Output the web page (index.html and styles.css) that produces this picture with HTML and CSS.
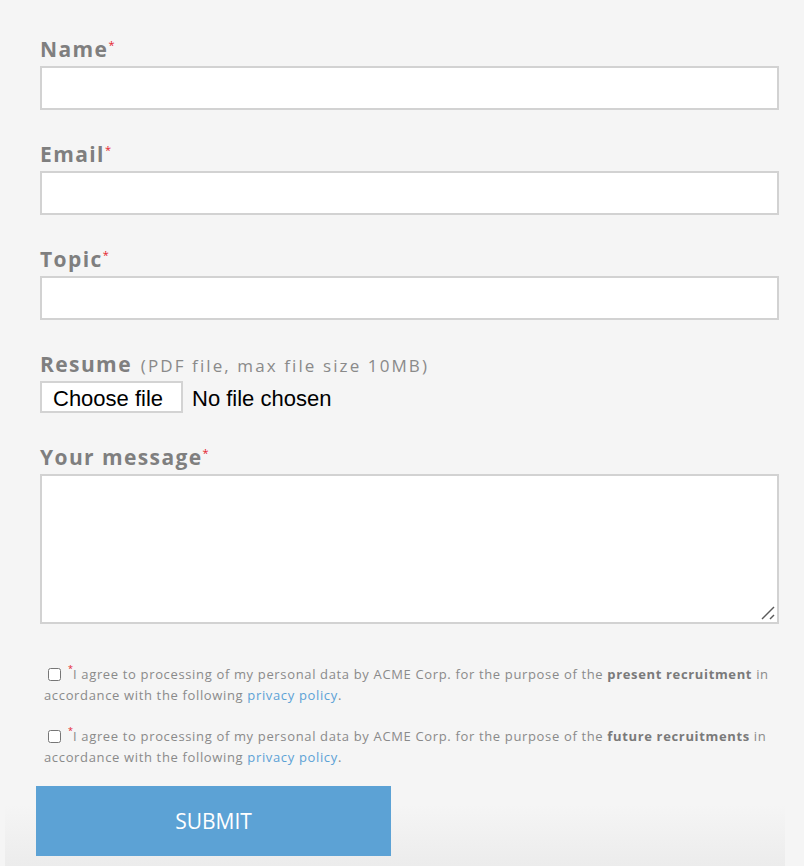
FILE: index.html
```html
<!DOCTYPE html>
<html lang="en">
<head>
<meta charset="utf-8">
<title>Application form</title>
<link rel="stylesheet" href="styles.css">
</head>
<body>
<div class="page">
  <form class="form">
    <div class="field">
      <label class="label" for="name">Name<sup class="req">*</sup></label>
      <input class="input" id="name" type="text">
    </div>
    <div class="field">
      <label class="label" for="email">Email<sup class="req">*</sup></label>
      <input class="input" id="email" type="email">
    </div>
    <div class="field">
      <label class="label" for="topic">Topic<sup class="req">*</sup></label>
      <input class="input" id="topic" type="text">
    </div>
    <div class="field">
      <div class="label">Resume <span class="hint">(PDF file, max file size 10MB)</span></div>
      <div class="file">
        <label class="file-btn" for="resume">Choose file</label>
        <span class="file-name">No file chosen</span>
        <input class="file-input" id="resume" type="file">
      </div>
    </div>
    <div class="field field-last">
      <label class="label" for="msg">Your message<sup class="req">*</sup></label>
      <div class="textarea-wrap">
        <textarea class="textarea" id="msg"></textarea>
        <svg class="grip" width="14" height="14" viewBox="0 0 14 14" aria-hidden="true">
          <line x1="1" y1="13" x2="13" y2="1" stroke="#5a5a5a" stroke-width="1.4"/>
          <line x1="9" y1="13" x2="13" y2="9" stroke="#5a5a5a" stroke-width="1.4"/>
        </svg>
      </div>
    </div>
    <p class="consent"><input class="check" type="checkbox"> <sup class="req small">*</sup>I agree to processing of my personal data by ACME Corp. for the purpose of the <b>present recruitment</b> in accordance with the following <a class="link" href="#">privacy policy</a>.</p>
    <p class="consent"><input class="check" type="checkbox"> <sup class="req small">*</sup>I agree to processing of my personal data by ACME Corp. for the purpose of the <b>future recruitments</b> in accordance with the following <a class="link" href="#">privacy policy</a>.</p>
    <button class="submit" type="submit">SUBMIT</button>
  </form>
</div>
</body>
</html>
```
FILE: styles.css
```css
html, body {
  margin: 0;
  padding: 0;
  background: #f5f5f5;
}
.page {
  margin: 0 19px 0 5px;
  min-height: 866px;
  background: linear-gradient(to bottom, #f5f5f5 0, #f5f5f5 805px, #ececec 866px);
}
.form {
  padding: 36px 0 0 35px;
  width: 739px;
  font-family: "Open Sans", sans-serif;
}
.field {
  margin-bottom: 31px;
}
.field-last {
  margin-bottom: 38px;
}
.label {
  display: block;
  height: 26px;
  font-size: 21px;
  line-height: 26px;
  font-weight: 700;
  letter-spacing: 1.4px;
  color: #7f7f7f;
  margin-bottom: 4px;
}
.req {
  color: #e4222c;
  font-size: 11px;
  font-weight: 400;
  vertical-align: top;
  line-height: 11px;
  position: relative;
  top: 3px;
  letter-spacing: 0;
}
.req.small {
  font-size: 9px;
  line-height: 9px;
  top: 0;
}
.hint {
  font-size: 17px;
  line-height: 20px;
  font-weight: 400;
  letter-spacing: 2.1px;
  color: #8a8a8a;
  margin-left: 2px;
}
.input {
  display: block;
  box-sizing: border-box;
  width: 739px;
  height: 44px;
  margin: 0;
  border: 2px solid #d2d2d2;
  background: #fff;
  outline: none;
}
.textarea-wrap {
  position: relative;
  width: 739px;
  height: 150px;
}
.textarea {
  display: block;
  box-sizing: border-box;
  width: 739px;
  height: 150px;
  margin: 0;
  border: 2px solid #d2d2d2;
  background: #fff;
  outline: none;
  resize: none;
}
.grip {
  position: absolute;
  right: 4px;
  bottom: 4px;
}
.file {
  display: flex;
  align-items: center;
  height: 32px;
  font-family: "Liberation Sans", Arial, sans-serif;
  font-size: 22px;
  color: #000;
}
.file-btn {
  box-sizing: border-box;
  display: flex;
  align-items: center;
  height: 32px;
  width: 143px;
  padding: 3px 0 0 11px;
  border: 2px solid #d3d3d3;
  background: #fff;
}
.file-name {
  margin-left: 9px;
  padding-top: 3px;
}
.file-input {
  display: none;
}
.consent {
  margin: 0 0 20px 4px;
  padding-top: 2px;
  height: 40px;
  font-size: 13px;
  line-height: 21px;
  letter-spacing: 0.65px;
  color: #8a8a8a;
}
.consent b {
  font-weight: 700;
  color: #7a7a7a;
}
.check {
  width: 13px;
  height: 13px;
  margin: 0 3px 0 4px;
  vertical-align: -2px;
}
.link {
  color: #5ca2d5;
  text-decoration: none;
}
.submit {
  display: block;
  width: 355px;
  height: 70px;
  margin: 0 0 0 -4px;
  border: 0;
  background: #5ca2d5;
  color: #fff;
  font-family: "Open Sans", sans-serif;
  font-size: 21px;
  letter-spacing: 0;
}
```
